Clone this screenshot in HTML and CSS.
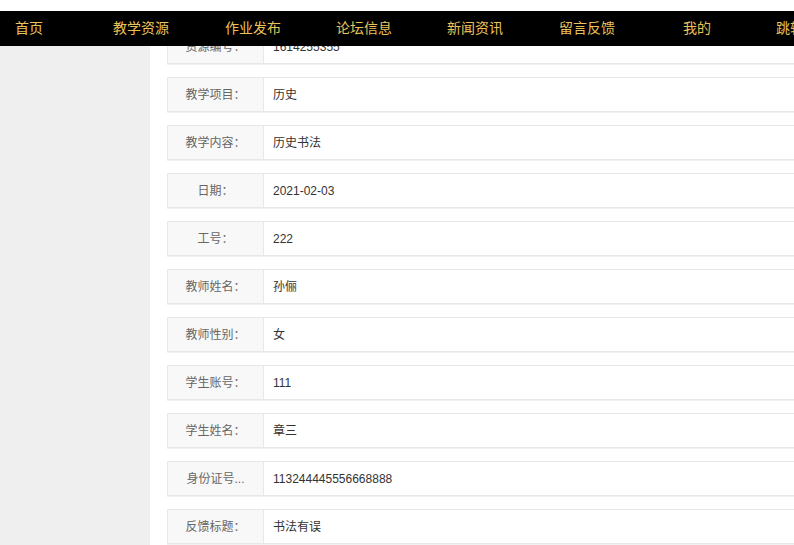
FILE: index.html
```html
<!DOCTYPE html>
<html lang="zh-CN">
<head>
    <meta charset="UTF-8">
    <meta name="viewport" content="width=device-width, initial-scale=1.0">
    <title>反馈详情</title>
    <link rel="stylesheet" href="styles.css">
</head>
<body>
    <!-- top menu -->
    <div class="header">
        <div class="menu">
            <a href="#">首页</a>
            <a href="#">教学资源</a>
            <a href="#">作业发布</a>
            <a href="#">论坛信息</a>
            <a href="#">新闻资讯</a>
            <a href="#">留言反馈</a>
            <a href="#">我的</a>
            <a href="#">跳转到后台</a>
        </div>
    </div>

    <div class="page">
        <div class="sidebar"></div>
        <div class="detail">
            <div class="field"><div class="field-label">资源编号：</div><div class="field-value">1614255355</div></div>
            <div class="field"><div class="field-label">教学项目：</div><div class="field-value">历史</div></div>
            <div class="field"><div class="field-label">教学内容：</div><div class="field-value">历史书法</div></div>
            <div class="field"><div class="field-label">日期：</div><div class="field-value">2021-02-03</div></div>
            <div class="field"><div class="field-label">工号：</div><div class="field-value">222</div></div>
            <div class="field"><div class="field-label">教师姓名：</div><div class="field-value">孙俪</div></div>
            <div class="field"><div class="field-label">教师性别：</div><div class="field-value">女</div></div>
            <div class="field"><div class="field-label">学生账号：</div><div class="field-value">111</div></div>
            <div class="field"><div class="field-label">学生姓名：</div><div class="field-value">章三</div></div>
            <div class="field"><div class="field-label">身份证号...</div><div class="field-value">113244445556668888</div></div>
            <div class="field"><div class="field-label">反馈标题：</div><div class="field-value">书法有误</div></div>
        </div>
    </div>
</body>
</html>
```

FILE: styles.css
```css
html, body {
    margin: 0;
    padding: 0;
    overflow: hidden;
}
body {
    font-family: "Liberation Sans", "Noto Sans CJK SC", sans-serif;
    font-size: 12px;
    background: #fff;
}

.header {
    position: fixed;
    top: 0;
    left: 0;
    width: 100%;
    padding-top: 11px;
    background: #fff;
    z-index: 10;
}
.menu {
    display: grid;
    grid-template-columns: 98px 112px 111px 111px 112px 124px 93px auto;
    height: 35px;
    padding-left: 15px;
    background: #000;
    white-space: nowrap;
    overflow: hidden;
}
.menu a {
    line-height: 35px;
    font-size: 14px;
    color: #ebc25a;
    text-decoration: none;
}

.page {
    display: flex;
    height: 545px;
}
.sidebar {
    width: 150px;
    flex-shrink: 0;
    background: #efefef;
}
.detail {
    width: 700px;
    flex-shrink: 0;
    padding: 29px 0 0 17px;
}

.field {
    display: flex;
    height: 33px;
    margin-bottom: 13px;
    border: 1px solid #e8e8e8;
    box-shadow: 0 1px 0 #f1f1f1;
}
.field-label {
    width: 95px;
    flex-shrink: 0;
    line-height: 34px;
    text-align: center;
    color: #666;
    background: #f8f8f8;
    border-right: 1px solid #e8e8e8;
}
.field-value {
    flex: 1;
    padding-left: 9px;
    line-height: 35px;
    color: #333;
}
```
